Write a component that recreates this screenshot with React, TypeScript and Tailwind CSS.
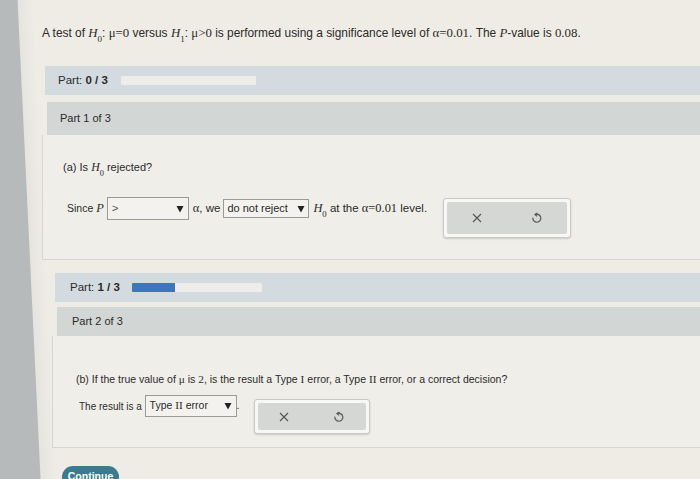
import React from "react";

const M = ({ children }: { children: React.ReactNode }) => (
  <span className="font-['Liberation_Serif',serif] text-[1.08em]">{children}</span>
);
const V = ({ children }: { children: React.ReactNode }) => (
  <span className="font-['Liberation_Serif',serif] text-[1.08em] italic">{children}</span>
);
const H = ({ n }: { n: string }) => (
  <span className="font-['Liberation_Serif',serif] text-[1.08em]">
    <i>H</i>
    <sub className="text-[0.7em] align-[-0.35em]">{n}</sub>
  </span>
);

const Caret = () => (
  <svg width="8" height="8" viewBox="0 0 8 8" className="shrink-0">
    <path d="M0.5 1 L7.5 1 L4 7.5 Z" fill="#222" />
  </svg>
);

const XIcon = () => (
  <svg width="10" height="10" viewBox="0 0 10 10">
    <path d="M1 1 L9 9 M9 1 L1 9" stroke="#555" strokeWidth="1.1" fill="none" />
  </svg>
);

const UndoIcon = () => (
  <svg width="11" height="12" viewBox="0 0 11 12">
    <path
      d="M4.2 2.6 A4 4 0 1 1 1.9 5.6"
      stroke="#555"
      strokeWidth="1.2"
      fill="none"
    />
    <path d="M6.4 1 L4 2.6 L6.2 4.4" stroke="#555" strokeWidth="1.2" fill="none" />
  </svg>
);

const ActionBox = ({ w, h }: { w: string; h: string }) => (
  <div
    className={`${w} ${h} shrink-0 rounded-[3px] border border-[#c9cac7] bg-[#f7f7f5] p-[3px] shadow-[0_1px_2px_rgba(0,0,0,0.15)]`}
  >
    <div className="flex h-full w-full items-center justify-around rounded-[2px] bg-[#d5d7d5]">
      <XIcon />
      <UndoIcon />
    </div>
  </div>
);

export default function App() {
  return (
    <div className="relative h-[479px] w-[700px] overflow-hidden bg-[linear-gradient(87.25deg,#b6baba_40px,#e6e4df_41px,#efece6_56px)] font-['Liberation_Sans',Arial,sans-serif] text-[#2b2b2b]">
      <div className="flex w-[760px] flex-col">
        {/* question */}
        <div className="ml-[42px] mt-[26px] h-[14px] whitespace-nowrap text-[11.9px] leading-[14px]">
          A test of <H n="0" />: <M>μ=0</M> versus <H n="1" />: <M>μ&gt;0</M> is performed using a
          significance level of <M>α=0.01</M>. The <V>P</V>-value is <M>0.08</M>.
        </div>

        {/* Part 0/3 */}
        <div className="ml-[45px] mt-[26px] flex h-[29px] items-center bg-[#d3dbe0] pl-[13px] text-[11.5px]">
          <span>
            Part: <b>0 / 3</b>
          </span>
          <div className="ml-[13px] h-[9px] w-[135px] rounded-[1px] bg-[#efede9]" />
        </div>

        {/* Part 1 of 3 */}
        <div className="ml-[47px] mt-[7px] flex h-[33px] items-center bg-[#d2d6d4] pl-[13px] text-[11px]">
          Part 1 of 3
        </div>
        <div className="ml-[42px] h-[125px] border-b border-l border-[#d6d6d2] bg-[#f0eee9] pl-[20px] pt-[25px] text-[11px]">
          <div className="h-[14px] leading-[14px]">
            (a) Is <H n="0" /> rejected?
          </div>
          <div className="mt-[23px] flex items-start whitespace-nowrap pl-[4px] text-[11.5px]">
            <div className="flex items-center">
              <span className="text-[10.5px]">Since&nbsp;</span>
              <V>P</V>
              <div className="ml-[3px] flex h-[23px] w-[82px] items-center justify-between border border-[#9a9a98] bg-[#f3f2ef] px-[4px]">
                <span className="text-[#555]">&gt;</span>
                <Caret />
              </div>
              <span className="ml-[4px]">
                <M>α</M>, we
              </span>
              <div className="ml-[3px] flex h-[19px] w-[86px] items-center justify-between border border-[#9a9a98] bg-[#f3f2ef] px-[3px]">
                <span className="text-[11px]">do not reject</span>
                <Caret />
              </div>
              <span className="ml-[4px]">
                <H n="0" /> at the <M>α=0.01</M> level.
              </span>
            </div>
            <div className="ml-[16px] mt-[1px]">
              <ActionBox w="w-[128px]" h="h-[40px]" />
            </div>
          </div>
        </div>

        {/* Part 1/3 */}
        <div className="ml-[55px] mt-[13px] flex h-[29px] items-center bg-[#d3dbe0] pl-[15px] text-[11.5px]">
          <span>
            Part: <b>1 / 3</b>
          </span>
          <div className="ml-[12px] flex h-[9px] w-[130px] overflow-hidden rounded-[1px] bg-[#efede9]">
            <div className="h-full w-[43px] bg-[#3a77c0]" />
          </div>
        </div>

        {/* Part 2 of 3 */}
        <div className="ml-[57px] mt-[5px] flex h-[29px] items-center bg-[#d2d6d4] pl-[15px] text-[11px]">
          Part 2 of 3
        </div>
        <div className="ml-[52px] h-[112px] border-b border-l border-[#d6d6d2] bg-[#f0eee9] pl-[23px] pt-[36px] text-[10.5px]">
          <div className="h-[14px] whitespace-nowrap leading-[14px]">
            (b) If the true value of <M>μ</M> is <M>2</M>, is the result a Type <M>I</M> error, a Type{" "}
            <M>II</M> error, or a correct decision?
          </div>
          <div className="mt-[9px] flex items-start pl-[3px]">
            <div className="flex items-center">
              <span className="text-[10px]">The result is a&nbsp;</span>
              <div className="flex h-[22px] w-[92px] items-center justify-between border border-[#9a9a98] bg-[#f3f2ef] px-[4px]">
                <span>
                  Type <M>II</M> error
                </span>
                <Caret />
              </div>
              <span>.</span>
            </div>
            <div className="ml-[14px] mt-[4px]">
              <ActionBox w="w-[116px]" h="h-[35px]" />
            </div>
          </div>
        </div>

        {/* Continue */}
        <div className="ml-[62px] mt-[18px] flex h-[22px] w-[57px] items-start justify-center rounded-full bg-[#3a7b8f] pt-[3px] text-[10.5px] font-bold text-white">
          Continue
        </div>
      </div>
    </div>
  );
}
